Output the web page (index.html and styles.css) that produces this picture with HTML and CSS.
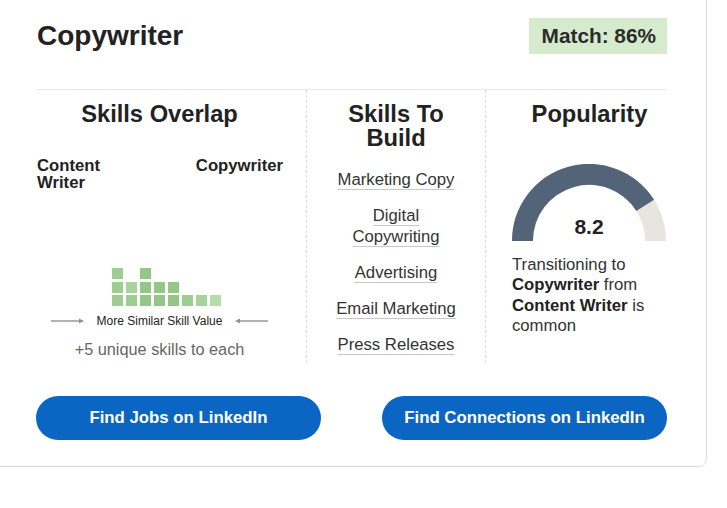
FILE: index.html
```html
<!DOCTYPE html>
<html lang="en">
<head>
    <meta charset="UTF-8">
    <meta name="viewport" content="width=device-width, initial-scale=1.0">
    <title>Copywriter</title>
    <link rel="stylesheet" href="styles.css">
</head>
<body>
    <div class="card">
        <div class="card-head">
            <h1>Copywriter</h1>
            <div class="match">Match: 86%</div>
        </div>

        <div class="columns">
            <div class="col col-overlap">
                <h2>Skills Overlap</h2>
                <div class="roles">
                    <div class="role role-from">Content Writer</div>
                    <div class="role role-to">Copywriter</div>
                </div>
                <div class="chart">
                    <div class="bar"><span class="sq s2"></span><span class="sq s2"></span><span class="sq s2"></span></div>
                    <div class="bar"><span class="sq s1"></span><span class="sq s2"></span></div>
                    <div class="bar"><span class="sq s3"></span><span class="sq s3"></span><span class="sq s3"></span></div>
                    <div class="bar"><span class="sq s3"></span><span class="sq s3"></span></div>
                    <div class="bar"><span class="sq s3"></span><span class="sq s3"></span></div>
                    <div class="bar"><span class="sq s2"></span></div>
                    <div class="bar"><span class="sq s1"></span></div>
                    <div class="bar"><span class="sq s0"></span></div>
                </div>
                <div class="legend">
                    <svg class="arrow" width="34" height="8" viewBox="0 0 34 8"><path d="M0 4H31" stroke="#8a939d" stroke-width="1.4"/><path d="M28 1.5L33 4L28 6.5Z" fill="#8a939d"/></svg>
                    <span>More Similar Skill Value</span>
                    <svg class="arrow" width="34" height="8" viewBox="0 0 34 8"><path d="M3 4H34" stroke="#8a939d" stroke-width="1.4"/><path d="M6 1.5L1 4L6 6.5Z" fill="#8a939d"/></svg>
                </div>
                <div class="unique">+5 unique skills to each</div>
            </div>

            <div class="col col-build">
                <h2>Skills To Build</h2>
                <ul class="skills">
                    <li><a href="#">Marketing Copy</a></li>
                    <li><a href="#">Digital Copywriting</a></li>
                    <li><a href="#">Advertising</a></li>
                    <li><a href="#">Email Marketing</a></li>
                    <li><a href="#">Press Releases</a></li>
                </ul>
            </div>

            <div class="col col-popularity">
                <h2>Popularity</h2>
                <div class="gauge">
                    <svg width="154" height="77" viewBox="0 0 154 77">
                        <path d="M10.5 77A66.5 66.5 0 0 1 143.5 77" fill="none" stroke="#e7e5e0" stroke-width="21"/>
                        <path d="M10.5 77A66.5 66.5 0 0 1 133.2 41.4" fill="none" stroke="#536479" stroke-width="21"/>
                    </svg>
                    <span class="gauge-value">8.2</span>
                </div>
                <p class="note">Transitioning to <b>Copywriter</b> from <b>Content Writer</b> is common</p>
            </div>
        </div>

        <div class="actions">
            <a class="btn" href="#">Find Jobs on LinkedIn</a>
            <a class="btn" href="#">Find Connections on LinkedIn</a>
        </div>
    </div>
</body>
</html>
```

FILE: styles.css
```css
body {
    font-family: 'Liberation Sans', Arial, sans-serif;
    color: #333;
    background: #fff;
    margin: 0;
}

.card {
    margin: -10px 20px 0 -10px;
    padding: 27px 39px 26px 45px;
    border: 1px solid #dcdcdc;
    border-radius: 8px;
    background: #fff;
}

.card-head {
    display: flex;
    justify-content: space-between;
    align-items: center;
    padding-bottom: 35px;
    border-bottom: 1px solid #e8e8e8;
}

h1 {
    font-size: 28px;
    line-height: 36px;
    margin: 0 0 0 1px;
    color: #222;
}

.match {
    background: #d6ebcd;
    color: #2b2b2b;
    font-weight: bold;
    font-size: 20.8px;
    line-height: 36px;
    padding: 0 11px 0 13px;
}

.columns {
    display: grid;
    grid-template-columns: 270px 180px 1fr;
}

.col {
    padding: 12px 0 4px;
}

h2 {
    font-size: 23.7px;
    line-height: 24px;
    margin: 0;
    text-align: center;
    color: #222;
}

/* skills overlap */
.col-overlap {
    padding-right: 23px;
}

.roles {
    display: flex;
    justify-content: space-between;
    margin-top: 31px;
    font-size: 16.7px;
    line-height: 17px;
    font-weight: bold;
    color: #222;
}

.role-from {
    width: 80px;
    margin-left: 1px;
}

.chart {
    display: flex;
    align-items: flex-end;
    gap: 3px;
    height: 39px;
    margin: 76px 0 0 76px;
}

.bar {
    display: flex;
    flex-direction: column;
    gap: 2.5px;
}

.sq {
    display: block;
    width: 11px;
    height: 11px;
}

.s0 { background: #b7dcac; }
.s1 { background: #a8d49c; }
.s2 { background: #9dcd90; }
.s3 { background: #92c785; }

.legend {
    display: flex;
    justify-content: center;
    align-items: center;
    gap: 12px;
    margin-top: 8px;
    font-size: 12px;
    line-height: 14px;
    color: #222;
}

.arrow {
    display: block;
}

.unique {
    text-align: center;
    font-size: 16.3px;
    line-height: 19px;
    margin-top: 12px;
    color: #666;
}

/* skills to build */
.col-build {
    padding-left: 24px;
    padding-right: 24px;
    border-left: 1px dashed #dedede;
    border-right: 1px dashed #dedede;
}

.skills {
    list-style: none;
    margin: 19px 0 0;
    padding: 0;
    text-align: center;
    font-size: 16.7px;
    line-height: 21px;
}

.skills li {
    margin-bottom: 15px;
}

.skills li:last-child {
    margin-bottom: 0;
}

.skills a {
    color: #333;
    text-decoration: underline;
    text-decoration-color: #c8c8c8;
    text-decoration-thickness: 1px;
    text-underline-offset: 4px;
}

/* popularity */
.col-popularity {
    padding-left: 26px;
}

.gauge {
    position: relative;
    width: 154px;
    margin: 38px auto 0 0;
    height: 77px;
}

.gauge svg {
    display: block;
}

.gauge-value {
    position: absolute;
    left: 0;
    right: 0;
    bottom: 2px;
    text-align: center;
    font-weight: bold;
    font-size: 21px;
    color: #222;
}

.note {
    margin: 14px 0 0;
    font-size: 16.7px;
    line-height: 20.4px;
    color: #333;
}

.note b {
    color: #222;
}

/* buttons */
.actions {
    display: flex;
    justify-content: space-between;
    margin-top: 33px;
}

.btn {
    display: flex;
    align-items: center;
    justify-content: center;
    width: 285px;
    height: 44px;
    border-radius: 22px;
    background: #0a66c2;
    color: #fff;
    font-weight: bold;
    font-size: 16.8px;
    text-decoration: none;
}
```
